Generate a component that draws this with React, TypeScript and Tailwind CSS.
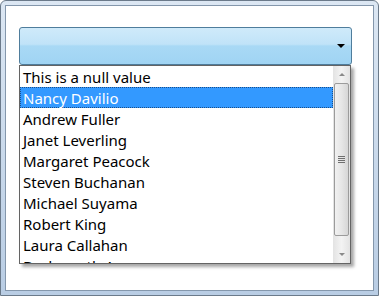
import React from "react";

const names = [
  "This is a null value",
  "Nancy Davilio",
  "Andrew Fuller",
  "Janet Leverling",
  "Margaret Peacock",
  "Steven Buchanan",
  "Michael Suyama",
  "Robert King",
  "Laura Callahan",
  "Dodsworth Anne",
];

function ScrollBar() {
  return (
    <div className="flex w-[17px] flex-col bg-gradient-to-r from-[#e3e3e3] via-[#f3f3f3] to-[#e3e3e3]">
      <div className="flex h-[17px] items-center justify-center">
        <div className="h-0 w-0 border-x-[3px] border-b-[3px] border-x-transparent border-b-[#8a8a8a]" />
      </div>
      <div className="mx-px flex h-[153px] items-center justify-center rounded-[2px] border border-[#9b9b9b] bg-gradient-to-r from-[#f1f1f1] via-[#e6e6e6] to-[#d6d6d6]">
        <div className="flex w-[7px] flex-col gap-px">
          <div className="h-px bg-[#6f6f6f]" />
          <div className="h-px bg-[#6f6f6f]" />
          <div className="h-px bg-[#6f6f6f]" />
          <div className="h-px bg-[#6f6f6f]" />
        </div>
      </div>
      <div className="flex-1" />
      <div className="flex h-[17px] items-center justify-center">
        <div className="h-0 w-0 border-x-[3px] border-t-[3px] border-x-transparent border-t-[#8a8a8a]" />
      </div>
    </div>
  );
}

export default function App() {
  return (
    <div
      className="h-[296px] w-[379px] rounded-t-[6px] border border-[#6b7a8a] bg-gradient-to-b from-[#dce7f3] to-[#b9cde4] p-[4px]"
      style={{ fontFamily: '"Noto Sans", sans-serif' }}
    >
      <div className="h-full w-full border border-[#8497ac] bg-white pl-[13px] pt-[21px]">
        <div className="flex h-[38px] w-[333px] items-center justify-end rounded-[3px] border border-[#4f7d9c] bg-[linear-gradient(to_bottom,#cfeafa_0%,#c0e3f8_45%,#a9d9f5_50%,#a0d4f3_100%)] pr-[6px]">
          <div className="h-0 w-0 border-x-[4px] border-t-[4px] border-x-transparent border-t-black" />
        </div>
        <div className="flex h-[199px] w-[332px] border border-[#646464] bg-white shadow-[3px_3px_3px_rgba(0,0,0,0.35)]">
          <div className="flex-1 overflow-hidden">
            {names.map((n, i) => (
              <div
                key={n}
                className={
                  i === 1
                    ? "h-[21px] border border-dotted border-[#1b4f8a] bg-[#3399ff] pl-[2px] pt-px text-[15px] leading-[19px] text-white"
                    : "h-[21px] pl-[3px] pt-px text-[15px] leading-[21px] text-black"
                }
              >
                {n}
              </div>
            ))}
          </div>
          <ScrollBar />
        </div>
      </div>
    </div>
  );
}
